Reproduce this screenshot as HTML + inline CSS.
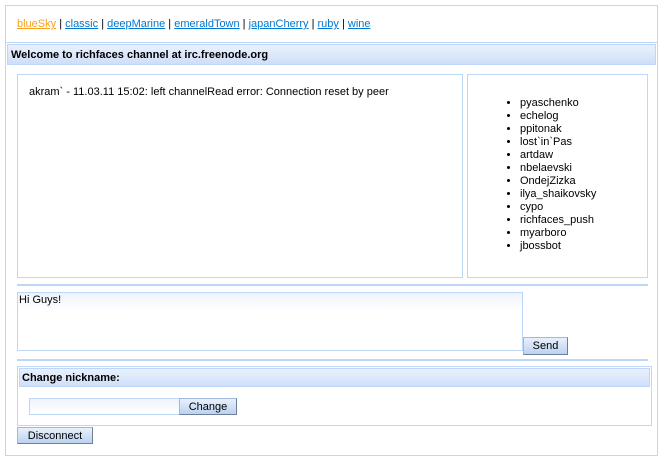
<!DOCTYPE html>
<html><head><style>
body{margin:0;background:#fff;font-family:"Liberation Sans",sans-serif;font-size:11px;color:#000;}
.a{position:absolute;box-sizing:border-box;}
.outer{left:5px;top:5px;width:653px;height:451px;border:1px solid #bed6f8;}
a{color:#0078d0;text-decoration:underline;}
.hdr{background:linear-gradient(#eaf1fd,#cfdff8);border:1px solid #bed6f8;font-weight:bold;padding-left:3px;}
.btn{background:linear-gradient(#e8f0fc,#bcd2f0);border:1px solid #9fb8de;border-right-color:#707f99;border-bottom-color:#707f99;text-align:center;font-size:11px;}
.rule{height:2px;background:#bed6f8;}
ul{margin:0;padding:0 0 0 52px;}
li{line-height:13px;}
</style></head><body>
<div class="a outer"></div>
<div class="a" style="left:17px;top:18px;font-size:11px;color:#000"><a style="color:#f8a020">blueSky</a> | <a>classic</a> | <a>deepMarine</a> | <a>emeraldTown</a> | <a>japanCherry</a> | <a>ruby</a> | <a>wine</a></div>
<div class="a" style="left:5px;top:42px;width:653px;height:1px;background:#bed6f8"></div>
<div class="a hdr" style="left:7px;top:44px;width:649px;height:21px;line-height:20px;font-size:11px">Welcome to richfaces channel at irc.freenode.org</div>
<div class="a" style="left:17px;top:74px;width:446px;height:204px;border:1px solid #bed6f8"></div>
<div class="a" style="left:29px;top:86px">akram` - 11.03.11 15:02: left channelRead error: Connection reset by peer</div>
<div class="a" style="left:467px;top:74px;width:181px;height:204px;border:1px solid #bed6f8;padding-top:22px">
<ul><li>pyaschenko</li><li>echelog</li><li>ppitonak</li><li>lost`in`Pas</li><li>artdaw</li><li>nbelaevski</li><li>OndejZizka</li><li>ilya_shaikovsky</li><li>cypo</li><li>richfaces_push</li><li>myarboro</li><li>jbossbot</li></ul></div>
<div class="a rule" style="left:17px;top:284px;width:631px"></div>
<div class="a" style="left:17px;top:292px;width:506px;height:59px;border:1px solid #bed6f8;background:linear-gradient(#eef3fc,#fff 30%);padding:1px 1px">Hi Guys!</div>
<div class="a btn" style="left:523px;top:337px;width:45px;height:18px;line-height:16px">Send</div>
<div class="a rule" style="left:17px;top:359px;width:631px"></div>
<div class="a" style="left:17px;top:366px;width:635px;height:60px;border:1px solid #bed6f8"></div>
<div class="a hdr" style="left:19px;top:368px;width:631px;height:19px;line-height:19px;padding-left:2px">Change nickname:</div>
<div class="a" style="left:29px;top:398px;width:151px;height:17px;border:1px solid #bed6f8;background:linear-gradient(#eef3fc,#fff)"></div>
<div class="a btn" style="left:179px;top:398px;width:58px;height:17px;line-height:16px">Change</div>
<div class="a btn" style="left:17px;top:427px;width:76px;height:17px;line-height:16px">Disconnect</div>
</body></html>
